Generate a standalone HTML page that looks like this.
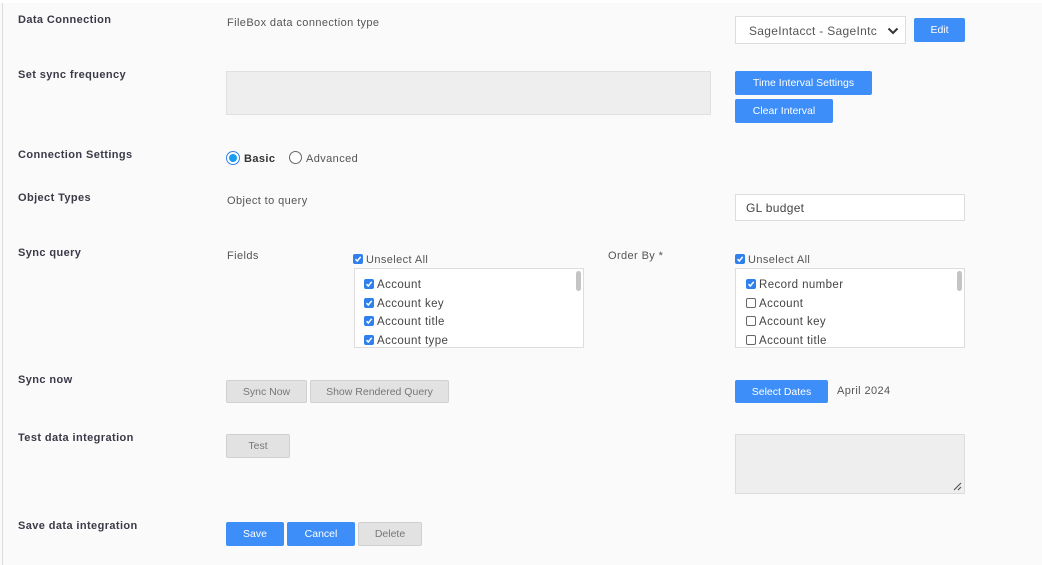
<!DOCTYPE html>
<html><head><meta charset="utf-8"><style>
*{box-sizing:border-box;margin:0;padding:0}
body{width:1042px;height:565px;background:#fafafa;font-family:"Liberation Sans",sans-serif;position:relative;overflow:hidden;color:#444}
.top{position:absolute;left:0;top:0;width:1042px;height:3px;background:#fff}
.lb{position:absolute;left:2px;top:3px;width:1px;height:562px;background:#dcdcdc}
.a{position:absolute}
.lbl{font-size:11px;font-weight:bold;color:#3a3a48;letter-spacing:.4px;margin-top:1px}
.t{font-size:11px;color:#555;letter-spacing:.4px;margin-top:1px}
.btn{position:absolute;background:#3d8ef8;color:#fff;font-size:10.5px;border-radius:2px;text-align:center}
.gb{position:absolute;background:#e2e2e2;border:1px solid #d0d0d0;color:#777;font-size:10.5px;border-radius:2px;text-align:center}
.box{position:absolute;background:#fff;border:1px solid #ddd}
.cb{display:inline-block;width:10px;height:10px;border-radius:2px;background:#2f80ed;vertical-align:-1px;margin-right:3px;position:relative}
.cb svg{position:absolute;left:1px;top:1px}
.ub{display:inline-block;width:10px;height:10px;border-radius:2px;border:1px solid #666;background:#fff;vertical-align:-1px;margin-right:3px}
.li{font-size:11.5px;color:#444;height:18.5px;line-height:18px;letter-spacing:.4px}
.sb{position:absolute;right:2px;top:2px;width:5px;height:20px;background:#c4c4c4;border-radius:3px}
</style></head><body>
<div class="top"></div><div class="lb"></div>
<div class="a lbl" style="left:18px;top:13px">Data Connection</div>
<div class="a lbl" style="left:18px;top:68px">Set sync frequency</div>
<div class="a lbl" style="left:18px;top:148px">Connection Settings</div>
<div class="a lbl" style="left:18px;top:191px">Object Types</div>
<div class="a lbl" style="left:18px;top:246px">Sync query</div>
<div class="a lbl" style="left:18px;top:373px">Sync now</div>
<div class="a lbl" style="left:18px;top:431px">Test data integration</div>
<div class="a lbl" style="left:18px;top:519px">Save data integration</div>

<div class="a t" style="left:227px;top:16px">FileBox data connection type</div>
<div class="box" style="left:735px;top:16px;width:171px;height:28px;font-size:12px;color:#555;padding:7px 0 0 13px;letter-spacing:.3px;overflow:hidden;white-space:nowrap">SageIntacct - SageIntc
<svg style="position:absolute;right:6px;top:10px" width="12" height="8" viewBox="0 0 12 8"><path d="M1.5 1.5L6 6l4.5-4.5" stroke="#333" stroke-width="2" fill="none"/></svg></div>
<div class="btn" style="left:914px;top:18px;width:51px;height:24px;line-height:24px">Edit</div>

<div class="a" style="left:226px;top:71px;width:485px;height:44px;background:#eee;border:1px solid #e0e0e0"></div>
<div class="btn" style="left:735px;top:71px;width:137px;height:24px;line-height:24px">Time Interval Settings</div>
<div class="btn" style="left:735px;top:99px;width:98px;height:24px;line-height:24px">Clear Interval</div>

<div class="a" style="left:226px;top:151px;width:14px;height:14px;border-radius:50%;border:1px solid #2f80ed;background:#fff"><div style="position:absolute;left:2px;top:2px;width:8px;height:8px;border-radius:50%;background:#1a9cf0"></div></div>
<div class="a" style="left:244px;top:153px;font-size:11px;font-weight:bold;color:#333;letter-spacing:.4px">Basic</div>
<div class="a" style="left:289px;top:151px;width:13px;height:13px;border-radius:50%;border:1px solid #666;background:#fff"></div>
<div class="a t" style="left:306px;top:152px">Advanced</div>

<div class="a t" style="left:227px;top:194px">Object to query</div>
<div class="box" style="left:735px;top:194px;width:230px;height:27px;font-size:12px;color:#444;padding:6px 0 0 10px;letter-spacing:.3px">GL budget</div>

<div class="a t" style="left:227px;top:249px">Fields</div>
<div class="a t" style="left:608px;top:249px">Order By *</div>
<div class="a t" style="left:353px;top:253px"><span class="cb"><svg width="8" height="8" viewBox="0 0 8 8"><path d="M1.5 4.2L3.3 6 6.7 1.8" stroke="#fff" stroke-width="1.5" fill="none"/></svg></span>Unselect All</div>
<div class="a t" style="left:735px;top:253px"><span class="cb"><svg width="8" height="8" viewBox="0 0 8 8"><path d="M1.5 4.2L3.3 6 6.7 1.8" stroke="#fff" stroke-width="1.5" fill="none"/></svg></span>Unselect All</div>

<div class="box" style="left:354px;top:268px;width:230px;height:80px;padding:7px 0 0 9px">
<div class="sb"></div>
<div class="li"><span class="cb"><svg width="8" height="8" viewBox="0 0 8 8"><path d="M1.5 4.2L3.3 6 6.7 1.8" stroke="#fff" stroke-width="1.5" fill="none"/></svg></span>Account</div>
<div class="li"><span class="cb"><svg width="8" height="8" viewBox="0 0 8 8"><path d="M1.5 4.2L3.3 6 6.7 1.8" stroke="#fff" stroke-width="1.5" fill="none"/></svg></span>Account key</div>
<div class="li"><span class="cb"><svg width="8" height="8" viewBox="0 0 8 8"><path d="M1.5 4.2L3.3 6 6.7 1.8" stroke="#fff" stroke-width="1.5" fill="none"/></svg></span>Account title</div>
<div class="li"><span class="cb"><svg width="8" height="8" viewBox="0 0 8 8"><path d="M1.5 4.2L3.3 6 6.7 1.8" stroke="#fff" stroke-width="1.5" fill="none"/></svg></span>Account type</div>
</div>
<div class="box" style="left:735px;top:268px;width:230px;height:80px;padding:7px 0 0 10px">
<div class="sb"></div>
<div class="li"><span class="cb"><svg width="8" height="8" viewBox="0 0 8 8"><path d="M1.5 4.2L3.3 6 6.7 1.8" stroke="#fff" stroke-width="1.5" fill="none"/></svg></span>Record number</div>
<div class="li"><span class="ub"></span>Account</div>
<div class="li"><span class="ub"></span>Account key</div>
<div class="li"><span class="ub"></span>Account title</div>
</div>

<div class="gb" style="left:226px;top:380px;width:81px;height:23px;line-height:22px">Sync Now</div>
<div class="gb" style="left:310px;top:380px;width:139px;height:23px;line-height:22px">Show Rendered Query</div>
<div class="btn" style="left:735px;top:380px;width:93px;height:23px;line-height:24px">Select Dates</div>
<div class="a t" style="left:837px;top:384px">April 2024</div>

<div class="gb" style="left:226px;top:434px;width:64px;height:24px;line-height:22px">Test</div>
<div class="a" style="left:735px;top:434px;width:230px;height:60px;background:#eee;border:1px solid #ddd">
<svg style="position:absolute;right:2px;bottom:2px" width="9" height="9" viewBox="0 0 9 9"><path d="M1 8L8 1M5 8L8 5" stroke="#555" stroke-width="1.2"/></svg></div>

<div class="btn" style="left:226px;top:522px;width:58px;height:24px;line-height:24px">Save</div>
<div class="btn" style="left:287px;top:522px;width:68px;height:24px;line-height:24px">Cancel</div>
<div class="gb" style="left:358px;top:522px;width:64px;height:24px;line-height:22px">Delete</div>
</body></html>
